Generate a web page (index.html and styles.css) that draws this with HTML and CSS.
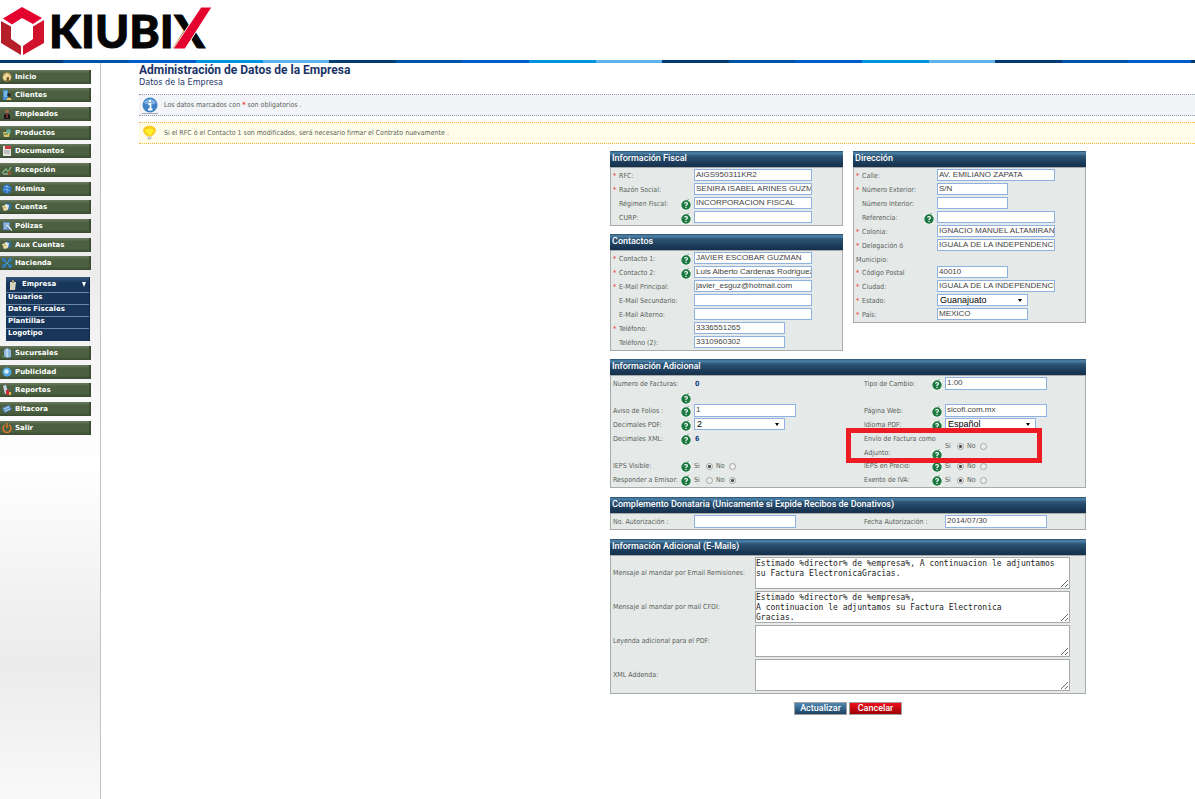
FILE: index.html
```html
<!DOCTYPE html>
<html lang="es">
<head>
	<meta charset="UTF-8">
	<meta name="viewport" content="width=device-width, initial-scale=1.0">
	<title>Kiubix - Datos de la Empresa</title>
	<link rel="stylesheet" href="styles.css">
</head>
<body>
	<!-- shared icons -->
	<svg class="defs" aria-hidden="true">
		<symbol id="help" viewBox="0 0 10 11">
			<rect x="0" y="1" width="10" height="10" fill="#f0f4f0"/>
			<path d="M6 1.500 L8 0" stroke="#7fae8c" fill="none"/>
			<circle cx="5" cy="6" r="4.700" fill="#1c7841"/>
			<path d="M3.500 4.500 Q3.700 3.500 5 3.500 Q6.500 3.600 6.400 4.800 Q6.200 5.600 5 6.200 V7" stroke="#fff" stroke-width="1.100" fill="none"/>
			<rect x="4.400" y="7.800" width="1.200" height="1.200" fill="#fff"/>
		</symbol>
		<symbol id="papers" viewBox="0 0 10 10">
			<path d="M4 1 L9 2 L9 7 L5 8 Z" fill="#2f6ea6"/>
			<path d="M3 2 L7 3 L6 8 L3 6 Z" fill="#dfeaf3"/>
			<path d="M0 4 L4 3 L6 8 L2 9 Z" fill="#e9dca6"/>
			<path d="M1 6 L4 5" stroke="#a98f4a" stroke-width=".6"/>
		</symbol>
	</svg>

	<header class="header">
		<svg class="logo" width="214" height="60" viewBox="0 0 214 60" role="img" aria-label="Kiubix">
			<path d="M3 18.500 L22 7 L42 18 L33 24 L22 18 L12 24.500 Z" fill="#e4032e"/>
			<path d="M1 21 L11 26.500 V39 L21 46 V55 L1 43 Z" fill="#b41f2a"/>
			<path d="M44 20 L33 26.500 V39 L23 46 V55 L44 43 Z" fill="#d0122d"/>
			<text x="49" y="48" class="logo-text">KIUBIX</text>
			<path d="M201 7 H212 L185 49 H173 Z" fill="#e4032e" stroke="#fff" stroke-width="1"/>
		</svg>
	</header>
	<div class="stripe"></div>

	<div class="layout">
		<nav class="sidebar">
			<ul class="menu">
				<li><a href="#"><svg viewBox="0 0 10 10"><circle cx="5" cy="5" r="4.500" fill="#c9a659"/><path d="M1 5 L5 1 L9 5 L8 8 H2 Z" fill="#ecd9a0"/><path d="M5 5 H7 V9 H4 Z" fill="#7d5a27"/></svg>Inicio</a></li>
				<li><a href="#"><svg viewBox="0 0 10 10"><path d="M1 0 H6 V10 H1 Z" fill="#3f8ed0"/><path d="M2 2 H5 M2 4 H5 M2 6 H5" stroke="#d9edfb" stroke-width=".8"/><circle cx="7" cy="5" r="1.800" fill="#222"/><path d="M4 10 Q7 5 10 10 Z" fill="#efc25a"/></svg>Clientes</a></li>
				<li><a href="#"><svg viewBox="0 0 10 10"><circle cx="5" cy="2.500" r="2" fill="#a06a50"/><path d="M2 10 V6 Q5 3 8 6 V10 Z" fill="#15171c"/><path d="M4.500 5 H5.500 V9 H4.500 Z" fill="#d8483c"/></svg>Empleados</a></li>
				<li><a href="#"><svg viewBox="0 0 10 10"><path d="M1 4 H8 L7 9 H2 Z" fill="#d9c56a"/><path d="M4 2 L8 1 L9 5 L5 5 Z" fill="#5fb0a0"/><path d="M2 6 H6" stroke="#2f6d3e"/></svg>Productos</a></li>
				<li><a href="#"><svg viewBox="0 0 10 10"><path d="M1 0 H9 V10 H1 Z" fill="#e8e3e3"/><path d="M3 0 H9 V3 H3 Z" fill="#cf3b42"/><path d="M2 5 H8 M2 7 H8" stroke="#8b8b8b" stroke-width=".8"/></svg>Documentos</a></li>
				<li><a href="#"><svg viewBox="0 0 10 10"><path d="M0 8 L4 4 L6 7 L9 2" stroke="#7fbf84" fill="none" stroke-width="1.200"/><path d="M6 6 H9 V10 H6 Z" fill="#8a5a3a"/><path d="M1 9 H6" stroke="#c9d9c4"/></svg>Recepción</a></li>
				<li><a href="#"><svg viewBox="0 0 10 10"><circle cx="5" cy="5" r="4.500" fill="#2a6fc0"/><path d="M2 3 Q5 1 8 4 M1 6 Q5 4 8 7 M5 1 V9" stroke="#8cc4f2" fill="none" stroke-width=".8"/></svg>Nómina</a></li>
				<li><a href="#"><svg><use href="#papers"/></svg>Cuentas</a></li>
				<li><a href="#"><svg viewBox="0 0 10 10"><path d="M1 1 H8 V9 H1 Z" fill="#5d8fc4"/><path d="M2 3 H7 M2 5 H6 M2 7 H5" stroke="#e4eef8" stroke-width=".8"/><path d="M5 4 L10 9.500" stroke="#dfe5ea" stroke-width="1.400"/></svg>Pólizas</a></li>
				<li><a href="#"><svg><use href="#papers"/></svg>Aux Cuentas</a></li>
				<li><a href="#"><svg viewBox="0 0 10 10"><path d="M0 0 H4 V4 H0 Z M6 0 H10 V4 H6 Z M0 6 H4 V10 H0 Z M6 6 H10 V10 H6 Z M3 3 H7 V7 H3 Z" fill="#2b6ea8"/><path d="M1 1 L9 9 M9 1 L1 9" stroke="#6fb59c" stroke-width="1" stroke-dasharray="2 1"/></svg>Hacienda</a></li>
			</ul>

			<div class="submenu">
				<a href="#" class="submenu-head"><svg viewBox="0 0 10 10"><path d="M2 2 H8 L7 10 H2 Z" fill="#d8d3bd"/><path d="M4 0 H6 V3 H4 Z" fill="#9a8c62"/></svg>Empresa<span class="arrow"></span></a>
				<a href="#">Usuarios</a>
				<a href="#">Datos Fiscales</a>
				<a href="#">Plantillas</a>
				<a href="#">Logotipo</a>
			</div>

			<ul class="menu menu-bottom">
				<li><a href="#"><svg viewBox="0 0 10 10"><path d="M2 2 L5 0 L9 2 V9 L5 10 L2 8 Z" fill="#8db8dd"/><path d="M5 1 V9" stroke="#e7f2fb"/><path d="M0 8 L3 10" stroke="#57a65a"/></svg>Sucursales</a></li>
				<li><a href="#"><svg viewBox="0 0 10 10"><circle cx="5" cy="5" r="4.500" fill="#4fa9e0"/><circle cx="4.500" cy="4.500" r="2.200" fill="#d5effc"/></svg>Publicidad</a></li>
				<li><a href="#"><svg viewBox="0 0 10 10"><path d="M1 1 L4 0 L6 8 L3 9 Z" fill="#c9d6ea"/><path d="M4 5 H7 V10 H4 Z" fill="#cc2b33"/><path d="M7 7 H9 V10 H7 Z" fill="#e0b84c"/></svg>Reportes</a></li>
				<li><a href="#"><svg viewBox="0 0 10 10"><path d="M0 4 L7 1 L10 5 L3 9 Z" fill="#5b92cc"/><path d="M2 5 L7 3 M3 7 L8 5" stroke="#dbe9f7" stroke-width=".8"/></svg>Bitacora</a></li>
				<li><a href="#"><svg viewBox="0 0 10 10"><path d="M3 2 A4 4 0 1 0 7 2 M5 0 V5" stroke="#e8792a" stroke-width="1.400" fill="none"/></svg>Salir</a></li>
			</ul>
		</nav>

		<main class="main">
			<h1>Administración de Datos de la Empresa</h1>
			<p class="subtitle">Datos de la Empresa</p>

			<div class="notice info">
				<svg viewBox="0 0 16 17"><circle cx="8" cy="8" r="7.500" fill="#3f83c6"/><path d="M2 6 A6.500 6.500 0 0 1 14 6 Q8 9 2 6 Z" fill="#7fb2e2"/><path d="M8 3 V5 M6.500 7 H8.500 V12 M6 12.500 H10.500" stroke="#fff" stroke-width="1.800" fill="none"/><path d="M0 16.500 H16" stroke="#a9acb2"/></svg>
				<p>Los datos marcados con <b class="req">*</b> son obligatorios .</p>
			</div>
			<div class="notice warn">
				<svg viewBox="0 0 16 17"><path d="M1 6 A6.500 5.500 0 0 1 14 6 Q13 9 9.500 11.500 H5.500 Q2 9 1 6 Z" fill="#fbcb1f"/><path d="M3 6 Q4 3 7 4 Q11 3 12 6 L8 11 Z" fill="#fff02a"/><path d="M5.500 11.500 H9.500 V14 Q7.500 16 5.500 14 Z" fill="#c9c9cf"/></svg>
				<p>Si el RFC ó el Contacto 1 son modificados, será necesario firmar el Contrato nuevamente .</p>
			</div>

			<form class="form">
				<div class="columns">
					<div class="column">
						<section class="panel">
							<h2>Información Fiscal</h2>
							<div class="body">
								<div class="row"><label for="rfc"><i>*</i>RFC:</label><span></span><input type="text" id="rfc" value="AIGS950311KR2"></div>
								<div class="row"><label for="razon"><i>*</i>Razón Social:</label><span></span><input type="text" id="razon" value="SENIRA ISABEL ARINES GUZM"></div>
								<div class="row"><label for="regimen"><i></i>Régimen Fiscal:</label><svg><use href="#help"/></svg><input type="text" id="regimen" value="INCORPORACION FISCAL"></div>
								<div class="row"><label for="curp"><i></i>CURP:</label><svg><use href="#help"/></svg><input type="text" id="curp"></div>
							</div>
						</section>
						<section class="panel">
							<h2>Contactos</h2>
							<div class="body">
								<div class="row"><label for="contacto1"><i>*</i>Contacto 1:</label><svg><use href="#help"/></svg><input type="text" id="contacto1" value="JAVIER ESCOBAR GUZMAN"></div>
								<div class="row"><label for="contacto2"><i>*</i>Contacto 2:</label><svg><use href="#help"/></svg><input type="text" id="contacto2" value="Luis Alberto Cardenas Rodriguez"></div>
								<div class="row"><label for="mail1"><i>*</i>E-Mail Principal:</label><span></span><input type="text" id="mail1" value="javier_esguz@hotmail.com"></div>
								<div class="row"><label for="mail2"><i></i>E-Mail Secundario:</label><span></span><input type="text" id="mail2"></div>
								<div class="row"><label for="mail3"><i></i>E-Mail Alterno:</label><span></span><input type="text" id="mail3"></div>
								<div class="row"><label for="tel1"><i>*</i>Teléfono:</label><span></span><input type="text" id="tel1" class="medium" value="3336551265"></div>
								<div class="row"><label for="tel2"><i></i>Teléfono (2):</label><span></span><input type="text" id="tel2" class="medium" value="3310960302"></div>
							</div>
						</section>
					</div>
					<div class="column">
						<section class="panel">
							<h2>Dirección</h2>
							<div class="body">
								<div class="row"><label for="calle"><i>*</i>Calle:</label><span></span><input type="text" id="calle" value="AV. EMILIANO ZAPATA"></div>
								<div class="row"><label for="numext"><i>*</i>Número Exterior:</label><span></span><input type="text" id="numext" class="short" value="S/N"></div>
								<div class="row"><label for="numint"><i></i>Número Interior:</label><span></span><input type="text" id="numint" class="short"></div>
								<div class="row"><label for="ref"><i></i>Referencia:</label><svg><use href="#help"/></svg><input type="text" id="ref"></div>
								<div class="row"><label for="colonia"><i>*</i>Colonia:</label><span></span><input type="text" id="colonia" value="IGNACIO MANUEL ALTAMIRANO"></div>
								<div class="row tall"><label for="deleg"><i>*</i>Delegación ó<br>Municipio:</label><span></span><input type="text" id="deleg" value="IGUALA DE LA INDEPENDENCIA"></div>
								<div class="row"><label for="cp"><i>*</i>Código Postal</label><span></span><input type="text" id="cp" class="short" value="40010"></div>
								<div class="row"><label for="ciudad"><i>*</i>Ciudad:</label><span></span><input type="text" id="ciudad" value="IGUALA DE LA INDEPENDENCIA"></div>
								<div class="row"><label for="estado"><i>*</i>Estado:</label><span></span><select id="estado" class="medium"><option>Guanajuato</option></select></div>
								<div class="row"><label for="pais"><i>*</i>País:</label><span></span><input type="text" id="pais" class="medium" value="MEXICO"></div>
							</div>
						</section>
					</div>
				</div>

				<section class="panel">
					<h2>Información Adicional</h2>
					<div class="body pairs">
						<div class="row tall"><span>Numero de Facturas:</span><svg class="low"><use href="#help"/></svg><b class="value">0</b></div>
						<div class="row tall"><label for="cambio">Tipo de Cambio:</label><svg><use href="#help"/></svg><input type="text" id="cambio" value="1.00"></div>

						<div class="row"><label for="folios">Aviso de Folios :</label><svg><use href="#help"/></svg><input type="text" id="folios" value="1"></div>
						<div class="row"><label for="web">Página Web:</label><svg><use href="#help"/></svg><input type="text" id="web" value="sicofi.com.mx"></div>

						<div class="row"><label for="decpdf">Decimales PDF:</label><svg><use href="#help"/></svg><select id="decpdf" class="medium"><option>2</option></select></div>
						<div class="row"><label for="idioma">Idioma PDF:</label><svg><use href="#help"/></svg><select id="idioma" class="medium"><option>Español</option></select></div>

						<div class="row tall"><span>Decimales XML:</span><svg><use href="#help"/></svg><b class="value">6</b></div>
						<div class="row tall"><span>Envío de Factura como<br>Adjunto:</span><svg class="low"><use href="#help"/></svg>
							<div class="radios middle"><label for="envio-si">Si</label><input type="radio" name="envio" id="envio-si" checked><label for="envio-no">No</label><input type="radio" name="envio" id="envio-no"></div></div>

						<div class="row"><span>IEPS Visible:</span><svg><use href="#help"/></svg>
							<div class="radios"><label for="iepsv-si">Si</label><input type="radio" name="iepsv" id="iepsv-si" checked><label for="iepsv-no">No</label><input type="radio" name="iepsv" id="iepsv-no"></div></div>
						<div class="row"><span>IEPS en Precio:</span><svg><use href="#help"/></svg>
							<div class="radios"><label for="iepsp-si">Si</label><input type="radio" name="iepsp" id="iepsp-si" checked><label for="iepsp-no">No</label><input type="radio" name="iepsp" id="iepsp-no"></div></div>

						<div class="row"><span>Responder a Emisor:</span><svg><use href="#help"/></svg>
							<div class="radios"><label for="resp-si">Si</label><input type="radio" name="resp" id="resp-si"><label for="resp-no">No</label><input type="radio" name="resp" id="resp-no" checked></div></div>
						<div class="row"><span>Exento de IVA:</span><svg><use href="#help"/></svg>
							<div class="radios"><label for="iva-si">Si</label><input type="radio" name="iva" id="iva-si" checked><label for="iva-no">No</label><input type="radio" name="iva" id="iva-no"></div></div>
						<div class="highlight"></div>
					</div>
				</section>

				<section class="panel spaced">
					<h2>Complemento Donataria (Unicamente si Expide Recibos de Donativos)</h2>
					<div class="body pairs">
						<div class="row"><label for="noaut">No. Autorización :</label><span></span><input type="text" id="noaut"></div>
						<div class="row"><label for="fechaaut">Fecha Autorización :</label><span></span><input type="text" id="fechaaut" value="2014/07/30"></div>
					</div>
				</section>

				<section class="panel spaced">
					<h2>Información Adicional (E-Mails)</h2>
					<div class="body messages">
						<label for="msg1">Mensaje al mandar por Email Remisiones:</label>
						<textarea id="msg1">Estimado %director% de %empresa%, A continuacion le adjuntamos su Factura ElectronicaGracias.</textarea>
						<label for="msg2">Mensaje al mandar por mail CFDI:</label>
						<textarea id="msg2">Estimado %director% de %empresa%,
A continuacion le adjuntamos su Factura Electronica
Gracias.</textarea>
						<label for="leyenda">Leyenda adicional para el PDF:</label>
						<textarea id="leyenda"></textarea>
						<label for="addenda">XML Addenda:</label>
						<textarea id="addenda"></textarea>
					</div>
				</section>

				<div class="actions">
					<button type="button" class="update">Actualizar</button>
					<button type="button" class="cancel">Cancelar</button>
				</div>
			</form>
		</main>
	</div>
</body>
</html>
```

FILE: styles.css
```css
* {
	box-sizing: border-box;
}

body {
	margin: 0;
	min-height: 100vh;
	display: flex;
	flex-direction: column;
	font-family: "DejaVu Sans Condensed", "DejaVu Sans", sans-serif;
	font-size: 7px;
	color: #5a5f5c;
	background: #fff;
}

h1, h2, p, ul {
	margin: 0;
	padding: 0;
}

a {
	color: inherit;
	text-decoration: none;
}

.defs {
	position: absolute;
	width: 0;
	height: 0;
}

/* header */
.header {
	height: 60px;
}

.logo {
	display: block;
}

.logo-text {
	font-family: Lato, sans-serif;
	font-weight: 900;
	font-size: 46px;
	fill: #050505;
	stroke: #050505;
	stroke-width: 1px;
}

.stripe {
	height: 3px;
	background: repeating-linear-gradient(90deg, #003b73 0 67px, #0054a6 67px 133px, #005bcb 133px 200px, #0094df 200px 267px, #60b3e8 267px 333px);
	background-position: -4px 0;
}

.layout {
	flex: 1;
	display: flex;
}

/* left menu */
.sidebar {
	width: 101px;
	flex: none;
	padding-top: 7px;
	border-right: 1px solid #c4c4c4;
	background: repeating-linear-gradient(#fff, #ebebeb 200px, #fff 400px);
	font-family: "DejaVu Sans", sans-serif;
	font-weight: bold;
	color: #fff;
}

.menu {
	list-style: none;
	width: 91px;
}

.menu li {
	margin-bottom: 5px;
}

.menu li:nth-child(3n+1) {
	margin-bottom: 4px;
}

.menu a {
	display: flex;
	align-items: center;
	gap: 3px;
	height: 14px;
	padding-left: 2px;
	background: linear-gradient(#6b7b60, #4d6142 25%, #4b5f41 75%, #3a4b32);
	border-right: 2px solid #3c4d34;
}

.menu svg, .submenu svg {
	width: 10px;
	height: 10px;
	flex: none;
}

.submenu {
	width: 84px;
	margin: 7px 0 5px 6px;
	padding-bottom: 1px;
	border-right: 1px solid #0d2745;
	background: #17365a;
}

.submenu a {
	display: block;
	height: 12px;
	line-height: 9px;
	padding-left: 2px;
	border-top: 1px solid #6c87a5;
}

.submenu .submenu-head {
	display: flex;
	align-items: center;
	gap: 4px;
	height: 15px;
	border-top: 0;
	background: linear-gradient(#35587f, #17365a 40%);
}

.arrow {
	margin: 0 3px 0 auto;
	border: 2px solid transparent;
	border-top: 5px solid #fff;
	border-bottom: 0;
}

.menu-bottom li:nth-child(3n+1) {
	margin-bottom: 5px;
}

.menu-bottom li:nth-child(2) {
	margin-bottom: 4px;
}

/* content */
.main {
	flex: 1;
	padding-left: 38px;
}

h1 {
	font-family: Roboto, sans-serif;
	font-size: 12px;
	line-height: 14px;
	color: #1b3468;
}

.subtitle {
	font-size: 9px;
	line-height: 10px;
	color: #1b3468;
	margin-bottom: 7px;
}

.notice {
	display: flex;
	align-items: center;
	gap: 6px;
	height: 22px;
	padding-left: 3px;
	margin-bottom: 6px;
	border-top: 1px dotted #8c98ad;
	border-bottom: 1px dotted #8c98ad;
	background: #f3f4f7;
}

.notice svg {
	width: 16px;
	height: 17px;
}

.warn {
	border-color: #f2b632;
	background: #fffde9;
}

.req {
	color: #f03030;
}

.form {
	width: 476px;
	margin: 7px 109px 0 auto;
}

.columns {
	display: grid;
	grid-template-columns: 1fr 1fr;
	gap: 10px;
}

.panel + .panel, .columns + .panel {
	margin-top: 8px;
}

.panel + .spaced {
	margin-top: 9px;
}

.panel h2 {
	height: 16px;
	padding-left: 2px;
	font-family: Roboto, sans-serif;
	font-weight: 500;
	font-size: 9px;
	line-height: 14px;
	color: #fff;
	background: linear-gradient(#2b4d6b, #4f86ad 2px, #2c5475 5px, #1c3a58 12px, #14304d);
}

.body {
	padding: 1px 0 0 2px;
	border: 1px solid #a9abaa;
	background: #e5e9e7;
}

.row {
	display: grid;
	grid-template-columns: 68px 13px auto;
	justify-content: start;
	height: 14px;
	line-height: 14px;
	white-space: nowrap;
}

.tall {
	height: 27px;
}

.row svg {
	width: 10px;
	height: 11px;
	margin-top: 2px;
}

.row .low {
	align-self: end;
}

.row i {
	display: inline-block;
	width: 6px;
	font-style: normal;
	color: #f03030;
}

input[type="text"], select {
	width: 118px;
	height: 12px;
	margin: 0;
	padding: 0 0 2px 1px;
	border: 1px solid #8fb1e2;
	border-radius: 0;
	outline: 0;
	background: #fff;
	font-family: "Liberation Sans", Arial, sans-serif;
	font-size: 8px;
	line-height: 10px;
	color: #444;
}

input.short {
	width: 71px;
}

input.medium, select.medium {
	width: 91px;
}

select {
	appearance: none;
	padding: 0 2px;
	font-size: 9px;
	color: #000;
	background: #fff url("data:image/svg+xml,%3Csvg xmlns='http://www.w3.org/2000/svg' width='4' height='3'%3E%3Cpath d='M0 0H4L2 3Z'/%3E%3C/svg%3E") no-repeat right 5px center;
}

.pairs {
	display: grid;
	grid-template-columns: 251px auto;
	position: relative;
}

.pairs input[type="text"] {
	width: 102px;
	height: 13px;
}

.value {
	color: #123f80;
	padding-left: 1px;
}

.radios {
	display: flex;
	align-items: center;
	height: 14px;
}

.radios label {
	width: 12px;
}

.radios input + label {
	width: 13px;
}

.middle {
	align-self: center;
}

input[type="radio"] {
	appearance: none;
	width: 7px;
	height: 7px;
	margin: 0 3px 0 0;
	border: 1px solid #a4a4a4;
	border-radius: 50%;
	background: #eee;
}

input[type="radio"]:checked {
	background: radial-gradient(#444 0 1px, #eee 2px);
}

.highlight {
	position: absolute;
	left: 235px;
	top: 52px;
	width: 196px;
	height: 35px;
	border: 5px solid #ed1c24;
}

.messages {
	display: grid;
	grid-template-columns: 142px 315px;
	align-items: center;
	row-gap: 2px;
	padding-bottom: 2px;
}

textarea {
	display: block;
	width: 100%;
	height: 32px;
	padding: 1px 0 0;
	border: 1px solid #a9a9a9;
	font-family: "DejaVu Sans Mono", monospace;
	font-size: 8px;
	line-height: 10px;
	color: #222;
	overflow: hidden;
	resize: both;
}

.actions {
	display: flex;
	justify-content: center;
	gap: 2px;
	margin-top: 8px;
}

.actions button {
	width: 53px;
	height: 13px;
	padding: 0;
	border: 1px solid #a0a0a0;
	font-family: Roboto, sans-serif;
	font-weight: 500;
	font-size: 9px;
	line-height: 11px;
	color: #fff;
}

.update {
	background: linear-gradient(#4f89b5, #1d4163);
}

.cancel {
	background: linear-gradient(#f01018, #9c0006);
}
```
